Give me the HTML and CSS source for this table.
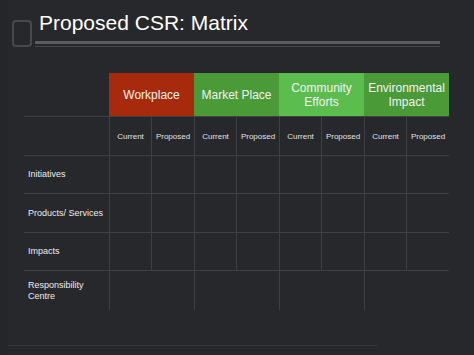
FILE: index.html
```html
<!DOCTYPE html>
<html>
<head>
<meta charset="utf-8">
<link rel="stylesheet" href="styles.css">
</head>
<body>
<div class="slide">
  <header class="title-bar">
    <div class="title-mark"></div>
    <div class="title-col">
      <h1 class="title">Proposed CSR: Matrix</h1>
      <div class="rule-thick"></div>
      <div class="rule-thin"></div>
    </div>
  </header>
  <div class="matrix">
    <div class="blank"></div>
    <div class="head red">Workplace</div>
    <div class="head green">Market Place</div>
    <div class="head light">Community<br>Efforts</div>
    <div class="head green">Environmental<br>Impact</div>

    <div class="label top"></div>
    <div class="sub top">Current</div><div class="sub top">Proposed</div>
    <div class="sub top">Current</div><div class="sub top">Proposed</div>
    <div class="sub top">Current</div><div class="sub top">Proposed</div>
    <div class="sub top">Current</div><div class="sub top">Proposed</div>

    <div class="label top">Initiatives</div>
    <div class="cell top"></div><div class="cell top"></div><div class="cell top"></div><div class="cell top"></div>
    <div class="cell top"></div><div class="cell top"></div><div class="cell top"></div><div class="cell top"></div>

    <div class="label top">Products/ Services</div>
    <div class="cell top"></div><div class="cell top"></div><div class="cell top"></div><div class="cell top"></div>
    <div class="cell top"></div><div class="cell top"></div><div class="cell top"></div><div class="cell top"></div>

    <div class="label top">Impacts</div>
    <div class="cell top"></div><div class="cell top"></div><div class="cell top"></div><div class="cell top"></div>
    <div class="cell top"></div><div class="cell top"></div><div class="cell top"></div><div class="cell top"></div>

    <div class="label top">Responsibility<br>Centre</div>
    <div class="cell top wide"></div><div class="cell top wide"></div>
    <div class="cell top wide"></div><div class="cell top wide"></div>
  </div>
  <div class="footer-line"></div>
</div>
</body>
</html>
```

FILE: styles.css
```css
html, body {
  margin: 0;
  padding: 0;
  background: #25262a;
}
.slide {
  margin-left: 8px;
  width: 466px;
  height: 355px;
  background: #27282c;
  font-family: "Liberation Sans", Arial, sans-serif;
  overflow: hidden;
}
.title-bar {
  display: flex;
  align-items: flex-start;
}
.title-mark {
  margin-left: 4px;
  margin-top: 20px;
  width: 16px;
  height: 23px;
  border: 2px solid #48494d;
  border-radius: 4px;
}
.title-col {
  margin-left: 3px;
  margin-top: 11px;
  width: 405px;
}
.title {
  margin: 0 0 6px 4px;
  font-size: 21px;
  line-height: 24px;
  font-weight: normal;
  color: #ffffff;
}
.rule-thick {
  height: 3px;
  background: #5b5c60;
}
.rule-thin {
  margin-top: 2px;
  height: 1px;
  background: #46474b;
}
.matrix {
  margin-top: 26px;
  margin-left: 16px;
  display: grid;
  grid-template-columns: 85px repeat(4, 42px 43px);
  grid-template-rows: 43px 39px 38px 39px 38px 40px;
}
.blank { }
.head {
  grid-column: span 2;
  display: flex;
  align-items: center;
  justify-content: center;
  text-align: center;
  font-size: 12px;
  line-height: 14px;
  color: #f2f2f2;
}
.red { background: #a62a0b; }
.green { background: #4a9a38; }
.light { background: #5bbd4d; }
.top { border-top: 1px solid #3f4044; }
.label {
  display: flex;
  align-items: center;
  padding-left: 4px;
  font-size: 9px;
  line-height: 11px;
  color: #eeeeee;
}
.sub {
  border-left: 1px solid #3f4044;
  display: flex;
  align-items: center;
  justify-content: center;
  font-size: 8px;
  color: #e2e2e2;
}
.cell {
  border-left: 1px solid #3f4044;
}
.cell.wide {
  grid-column: span 2;
  border-top: 1px solid #3f4044;
}
.footer-line {
  margin-top: 35px;
  width: 370px;
  height: 1px;
  background: #333438;
}
```
